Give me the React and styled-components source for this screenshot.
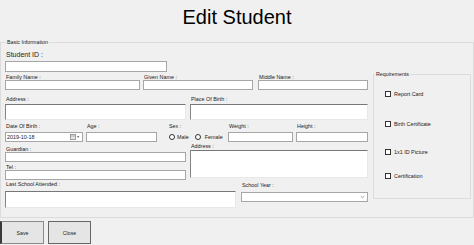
import styled, { createGlobalStyle } from "styled-components"

const GlobalStyle = createGlobalStyle`
  html, body {
    margin: 0;
    padding: 0;
    background: #f0f0f0;
  }
  body {
    width: 474px;
    height: 245px;
    overflow: hidden;
    font-family: "Liberation Sans", Arial, sans-serif;
    color: #222;
  }
  * { box-sizing: border-box; }
`

const Page = styled.div`
  width: 474px;
  height: 245px;
  display: flex;
  flex-direction: column;
`

const Header = styled.header`
  height: 39px;
  padding-bottom: 5px;
  display: flex;
  align-items: center;
  justify-content: center;
`

const Title = styled.h1`
  margin: 0;
  font-size: 20px;
  font-weight: 400;
  line-height: 1;
  color: #000;
`

const GroupBox = styled.fieldset`
  margin: ${p => p.$mt || 0}px 0 0 ${p => p.$ml || 0}px;
  padding: 0 ${p => p.$pr || 0}px 0 ${p => p.$pl || 0}px;
  border: 1px solid #dcdcdc;
  min-width: 0;
  width: ${p => p.$w ? p.$w + 'px' : 'auto'};
  height: ${p => p.$h}px;
  display: flex;
  flex-direction: ${p => p.$col ? 'column' : 'row'};
  flex-shrink: 0;
`

const Legend = styled.legend`
  padding: 0 1px;
  margin-left: 1px;
  font-size: 5.3px;
  line-height: 6px;
  color: #222;
`

const MainForm = styled.div`
  width: 363px;
  display: flex;
  flex-direction: column;
  flex-shrink: 0;
`

const Row = styled.div`
  display: flex;
  align-items: flex-start;
  gap: ${p => p.$gap || 0}px;
  margin-top: ${p => p.$mt || 0}px;
`

const Column = styled.div`
  display: flex;
  flex-direction: column;
  width: ${p => p.$w}px;
  flex-shrink: 0;
`

const Field = styled.div`
  display: flex;
  flex-direction: column;
  width: ${p => p.$w ? p.$w + 'px' : 'auto'};
  margin-top: ${p => p.$mt || 0}px;
  margin-left: ${p => p.$ml || 0}px;
  flex-shrink: 0;
`

const Label = styled.div`
  padding-left: 1px;
  font-size: ${p => p.$big ? '7px' : '5.4px'};
  line-height: ${p => p.$big ? '8px' : '6px'};
  margin-bottom: ${p => p.$mb || 0}px;
  white-space: nowrap;
  color: #222;
`

const TextBox = styled.div`
  height: ${p => p.$h || 10}px;
  background: #fff;
  border: 1px solid #a6a6a6;
  display: flex;
  align-items: center;
  justify-content: space-between;
  padding: 0 2px 0 1px;
  font-size: 5.4px;
  color: #222;
`

const TextArea = styled.div`
  height: ${p => p.$h}px;
  background: #fff;
  border: 1px solid;
  border-color: #777 #e8e8e8 #e8e8e8 #858585;
`

const RadioGroup = styled.div`
  height: 10px;
  display: flex;
  align-items: center;
  padding-left: 1px;
  font-size: 5.4px;
`

const Radio = styled.span`
  width: 6px;
  height: 6px;
  border-radius: 50%;
  border: 1px solid #333;
  background: #fff;
  margin-right: 2px;
  margin-left: ${p => p.$ml || 0}px;
`

const RadioText = styled.span`
  margin-left: ${p => p.$ml || 0}px;
`

const Check = styled.div`
  display: flex;
  align-items: center;
  height: 8px;
  margin-top: ${p => p.$mt}px;
  margin-left: 11px;
  font-size: 5.4px;
  color: #222;
`

const Box = styled.span`
  width: 6px;
  height: 6px;
  border: 1px solid #333;
  background: #fff;
  margin-right: 3px;
`

const Footer = styled.div`
  display: flex;
  gap: 4px;
  padding-top: 3px;
`

const Button = styled.button`
  width: ${p => p.$w}px;
  height: 23px;
  padding: 0;
  background: #e5e5e5;
  border: 1px solid ${p => p.$primary ? '#8a8a8a' : '#666'};
  border-left: ${p => p.$primary ? '2px solid #3a3a3a' : '1px solid #666'};
  font-family: "Liberation Sans", Arial, sans-serif;
  font-size: 5.2px;
  color: #222;
`

const CalendarIcon = () => (
  <svg width="10" height="6" viewBox="0 0 10 6">
    <rect x="0.5" y="0.5" width="5" height="5" fill="#e8e8e8" stroke="#8a8a8a" strokeWidth="0.8" />
    <line x1="0.5" y1="2" x2="5.5" y2="2" stroke="#8a8a8a" strokeWidth="0.6" />
    <path d="M7 2.3 L9.4 2.3 L8.2 3.8 Z" fill="#444" />
  </svg>
)

const Chevron = () => (
  <svg width="5" height="4" viewBox="0 0 5 4">
    <path d="M0.8 1.2 L2.5 2.8 L4.2 1.2" fill="none" stroke="#777" strokeWidth="0.7" />
  </svg>
)

const App = () => {
  return (
    <Page>
      <GlobalStyle />
      <Header>
        <Title>Edit Student</Title>
      </Header>

      <GroupBox $h={179} $pl={4} $pr={2}>
        <Legend>Basic Information</Legend>
        <MainForm>
          <Field $w={162} $mt={6}>
            <Label $big $mb={2}>Student ID :</Label>
            <TextBox $h={11} />
          </Field>

          <Row $mt={2}>
            <Field $w={135}>
              <Label>Family Name :</Label>
              <TextBox />
            </Field>
            <Field $w={110} $ml={3}>
              <Label>Given Name :</Label>
              <TextBox />
            </Field>
            <Field $w={110} $ml={5}>
              <Label>Middle Name :</Label>
              <TextBox />
            </Field>
          </Row>

          <Row $mt={6} $gap={4}>
            <Field $w={181}>
              <Label $mb={2}>Address :</Label>
              <TextArea $h={16} />
            </Field>
            <Field $w={178}>
              <Label $mb={2}>Place Of Birth :</Label>
              <TextArea $h={16} />
            </Field>
          </Row>

          <Row $mt={3} $gap={3}>
            <Field $w={78}>
              <Label $mb={3}>Date Of Birth :</Label>
              <TextBox>
                <span>2019-10-18</span>
                <CalendarIcon />
              </TextBox>
            </Field>
            <Field $w={71}>
              <Label $mb={3}>Age :</Label>
              <TextBox />
            </Field>
            <Field $w={57} $ml={8}>
              <Label $mb={3}>Sex :</Label>
              <RadioGroup>
                <Radio />
                <RadioText>Male</RadioText>
                <Radio $ml={6} />
                <RadioText $ml={2}>Female</RadioText>
              </RadioGroup>
            </Field>
            <Field $w={65}>
              <Label $mb={3}>Weight :</Label>
              <TextBox />
            </Field>
            <Field $w={72}>
              <Label $mb={3}>Height :</Label>
              <TextBox />
            </Field>
          </Row>

          <Row $gap={4}>
            <Column $w={181}>
              <Field $mt={4}>
                <Label>Guardian :</Label>
                <TextBox />
              </Field>
              <Field $mt={2}>
                <Label>Tel :</Label>
                <TextBox />
              </Field>
            </Column>
            <Field $w={178} $mt={1}>
              <Label $mb={1}>Address :</Label>
              <TextArea $h={28} />
            </Field>
          </Row>

          <Row $gap={5}>
            <Field $w={231} $mt={1}>
              <Label $mb={4}>Last School Attended :</Label>
              <TextArea $h={17} />
            </Field>
            <Field $w={127} $mt={2}>
              <Label $mb={4}>School Year :</Label>
              <TextBox>
                <span />
                <Chevron />
              </TextBox>
            </Field>
          </Row>
        </MainForm>

        <GroupBox $w={98} $h={128} $mt={26} $ml={5} $col>
          <Legend>Requirements</Legend>
          <Check $mt={13}><Box />Report Card</Check>
          <Check $mt={22}><Box />Birth Certificate</Check>
          <Check $mt={20}><Box />1x1 ID Picture</Check>
          <Check $mt={16}><Box />Certification</Check>
        </GroupBox>
      </GroupBox>

      <Footer>
        <Button $w={44} $primary>Save</Button>
        <Button $w={43}>Close</Button>
      </Footer>
    </Page>
  )
}

export default App
